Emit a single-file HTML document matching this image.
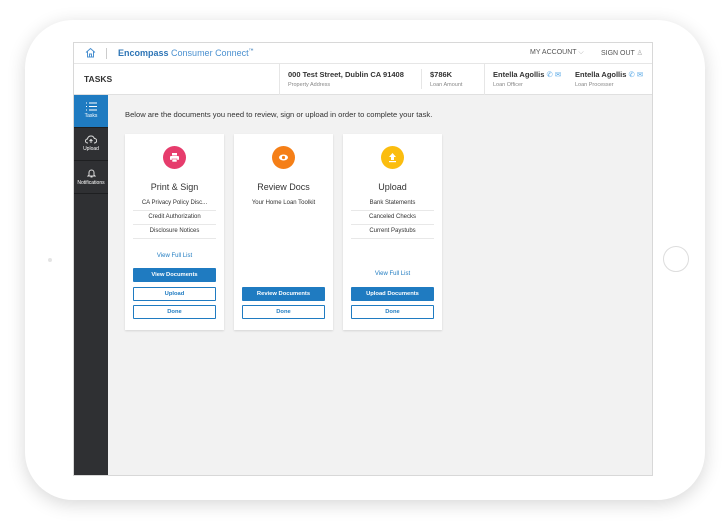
<!DOCTYPE html><html><head><style>
*{box-sizing:border-box;margin:0;padding:0}
body{width:722px;height:522px;background:#fff;font-family:"Liberation Sans",sans-serif;position:relative;overflow:hidden}
.frame{position:absolute;left:25px;top:20px;width:680px;height:480px;background:#fff;border-radius:48px;box-shadow:0 4px 18px rgba(0,0,0,.16)}
.scr{position:absolute;left:73px;top:42px;width:580px;height:434px;border:1px solid #d8d8d8;background:#f2f2f2;overflow:hidden}
.hdr{position:absolute;left:0;top:0;width:580px;height:21px;background:#fff;border-bottom:1px solid #e6e6e6;font-size:9px}
.bar{position:absolute;left:0;top:21px;width:580px;height:31px;background:#fff;border-bottom:1px solid #e0e0e0}
.side{position:absolute;left:0;top:52px;width:34px;height:382px;background:#2f3033}
.si{height:33px;border-bottom:1px solid #1e1f21;color:#fff;font-size:5px;text-align:center;padding-top:7px}
.card{position:absolute;top:91px;width:99px;height:196px;background:#fff;box-shadow:0 1px 2px rgba(0,0,0,.12)}
.ic{position:absolute;left:38px;top:12px;width:23px;height:23px;border-radius:50%}
.t{position:absolute;top:48px;width:100%;text-align:center;font-size:9px;color:#333}
.li{position:absolute;left:8px;width:83px;text-align:center;font-size:6px;color:#333;height:14px;line-height:13px;border-bottom:1px solid #e8e8e8;white-space:nowrap}
.btn{position:absolute;left:8px;width:83px;height:14px;font-size:5.8px;font-weight:bold;display:flex;align-items:center;justify-content:center;border-radius:1px}
.pb{background:#1f7bc1;color:#fff}
.ob{border:1px solid #1f7bc1;color:#1f7bc1;background:#fff}
.lk{position:absolute;width:100%;text-align:center;font-size:6px;color:#1f7bc1}
.s{font-size:5.5px;color:#888;margin-top:3px}
.b{font-size:7.5px;color:#333;font-weight:bold}
</style></head><body>
<div class="frame"></div>
<div style="position:absolute;left:48px;top:258px;width:4px;height:4px;border-radius:50%;background:#e4e4e4"></div>
<div style="position:absolute;left:663px;top:246px;width:26px;height:26px;border-radius:50%;border:1px solid #ddd"></div>
<div class="scr">
<div class="hdr">
<svg style="position:absolute;left:11px;top:4px" width="11" height="11" viewBox="0 0 11 11" fill="none" stroke="#4a90d0" stroke-width="1"><path d="M1 5.5L5.5 1.5 10 5.5M2.5 4.5V10h6V4.5M4.5 10V7h2v3"/></svg>
<div style="position:absolute;left:32px;top:5px;width:1px;height:11px;background:#ccc"></div>
<div style="position:absolute;left:44px;top:5px;font-size:9px;color:#2e75b6"><b>Encompass</b> <span style="color:#4a90d0">Consumer Connect</span><sup style="font-size:5px">™</sup></div>
<div style="position:absolute;left:456px;top:6px;font-size:7px;color:#555">MY ACCOUNT <span style="color:#aaa">⌵</span></div>
<div style="position:absolute;left:527px;top:6px;font-size:7px;color:#555">SIGN OUT <span style="color:#aaa">♙</span></div>
</div>
<div class="bar">
<div style="position:absolute;left:10px;top:10px;font-size:8.5px;font-weight:bold;color:#333">TASKS</div>
<div style="position:absolute;left:205px;top:0;width:1px;height:31px;background:#e6e6e6"></div>
<div style="position:absolute;left:214px;top:6px"><div class="b">000 Test Street, Dublin CA 91408</div><div class="s">Property Address</div></div>
<div style="position:absolute;left:347px;top:5px;width:1px;height:20px;background:#e6e6e6"></div>
<div style="position:absolute;left:356px;top:6px"><div class="b">$786K</div><div class="s">Loan Amount</div></div>
<div style="position:absolute;left:410px;top:0;width:1px;height:31px;background:#e6e6e6"></div>
<div style="position:absolute;left:419px;top:6px"><div class="b">Entella Agollis <span style="color:#5aa9e6;font-weight:normal">✆ ✉</span></div><div class="s">Loan Officer</div></div>
<div style="position:absolute;left:501px;top:6px"><div class="b">Entella Agollis <span style="color:#5aa9e6;font-weight:normal">✆ ✉</span></div><div class="s">Loan Processer</div></div>
</div>
<div class="side">
<div class="si" style="background:#1f7bc1"><svg width="11" height="9" viewBox="0 0 11 9" stroke="#fff" stroke-width="1"><path d="M0 1h1M3 1h8M0 4.5h1M3 4.5h8M0 8h1M3 8h8"/></svg><div>Tasks</div></div>
<div class="si"><svg width="12" height="9" viewBox="0 0 12 9" fill="none" stroke="#ddd" stroke-width="1"><path d="M3 8H2.5a2 2 0 010-4 3.5 3.5 0 016.8-.5A2.2 2.2 0 019.5 8H9M6 8V4.5M4.5 6L6 4.5 7.5 6"/></svg><div>Upload</div></div>
<div class="si"><svg width="9" height="10" viewBox="0 0 9 10" fill="none" stroke="#ddd" stroke-width="1"><path d="M2 7V4.5a2.5 2.5 0 015 0V7l1 1H1zM3.5 9h2"/></svg><div>Notifications</div></div>
</div>
<div style="position:absolute;left:51px;top:67px;font-size:7.6px;color:#333;white-space:nowrap">Below are the documents you need to review, sign or upload in order to complete your task.</div>

<div class="card" style="left:51px">
<div class="ic" style="background:#e63c6c"><svg style="margin:6px" width="11" height="11" viewBox="0 0 11 11" fill="#fff"><rect x="3" y="1" width="5" height="2.5"/><rect x="1" y="4" width="9" height="4" rx="1"/><rect x="3" y="7" width="5" height="3" fill="#fff" stroke="#e63c6c" stroke-width=".6"/></svg></div>
<div class="t">Print &amp; Sign</div>
<div class="li" style="top:63px">CA Privacy Policy Disc...</div>
<div class="li" style="top:77px">Credit Authorization</div>
<div class="li" style="top:91px">Disclosure Notices</div>
<div class="lk" style="top:119px">View Full List</div>
<div class="btn pb" style="top:134px">View Documents</div>
<div class="btn ob" style="top:153px">Upload</div>
<div class="btn ob" style="top:171px">Done</div>
</div>
<div class="card" style="left:160px">
<div class="ic" style="background:#f57f17"><svg style="margin:6px" width="11" height="11" viewBox="0 0 11 11"><ellipse cx="5.5" cy="5.5" rx="4.5" ry="3" fill="#fff"/><circle cx="5.5" cy="5.5" r="1.6" fill="#f57f17"/></svg></div>
<div class="t">Review Docs</div>
<div class="li" style="top:63px;border:none">Your Home Loan Toolkit</div>
<div class="btn pb" style="top:153px">Review Documents</div>
<div class="btn ob" style="top:171px">Done</div>
</div>
<div class="card" style="left:269px">
<div class="ic" style="background:#fbbd0f"><svg style="margin:6px" width="11" height="11" viewBox="0 0 11 11" fill="#fff"><path d="M5.5 1L9 5H7v3H4V5H2z"/><rect x="2" y="9" width="7" height="1.2"/></svg></div>
<div class="t">Upload</div>
<div class="li" style="top:63px">Bank Statements</div>
<div class="li" style="top:77px">Canceled Checks</div>
<div class="li" style="top:91px">Current Paystubs</div>
<div class="lk" style="top:137px">View Full List</div>
<div class="btn pb" style="top:153px">Upload Documents</div>
<div class="btn ob" style="top:171px">Done</div>
</div>
</div>
</body></html>
